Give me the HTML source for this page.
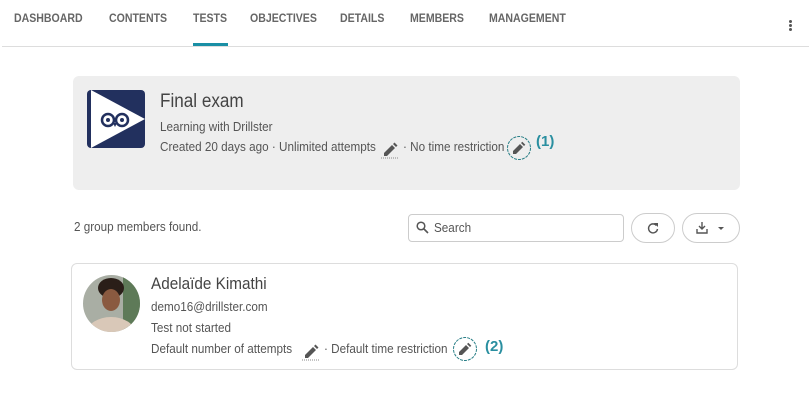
<!DOCTYPE html>
<html><head><meta charset="utf-8"><style>
*{margin:0;padding:0;box-sizing:border-box}
body{width:811px;height:415px;background:#fff;font-family:"Liberation Sans",sans-serif;color:#555;position:relative;overflow:hidden}
.a{position:absolute;white-space:nowrap}
.nav{top:11px;font-size:12px;font-weight:bold;color:#666;transform-origin:left;transform:scaleX(.88)}
.c{transform-origin:left;transform:scaleX(.9)}
</style></head><body>
<div class="a nav" style="left:14px">DASHBOARD</div>
<div class="a nav" style="left:109px">CONTENTS</div>
<div class="a nav" style="left:193px">TESTS</div>
<div class="a nav" style="left:250px">OBJECTIVES</div>
<div class="a nav" style="left:340px">DETAILS</div>
<div class="a nav" style="left:410px">MEMBERS</div>
<div class="a nav" style="left:489px">MANAGEMENT</div>
<div class="a" style="left:789px;top:20px;width:3px;font-size:0">
<div style="width:3px;height:3px;background:#555;border-radius:50%;margin-bottom:1px"></div><div style="width:3px;height:3px;background:#555;border-radius:50%;margin-bottom:1px"></div><div style="width:3px;height:3px;background:#555;border-radius:50%"></div></div>
<div class="a" style="left:193px;top:43px;width:35px;height:3px;background:#1a8fa5"></div>
<div class="a" style="left:2px;top:46px;width:807px;height:1px;background:#ddd"></div>

<div class="a" style="left:73px;top:76px;width:667px;height:114px;background:#eee;border-radius:6px"></div>
<svg class="a" style="left:87px;top:90px" width="58" height="58" viewBox="0 0 58 58">
<rect width="58" height="58" rx="4" fill="#22305e"/>
<polygon points="4,0 4,58 58,29" fill="#fff"/>
<circle cx="21" cy="30" r="6" fill="none" stroke="#22305e" stroke-width="2.5"/>
<circle cx="35" cy="30" r="6" fill="none" stroke="#22305e" stroke-width="2.5"/>
<circle cx="21" cy="30" r="2" fill="#22305e"/><circle cx="35" cy="30" r="2" fill="#22305e"/>
<polygon points="26,33 30,33 28,37" fill="#22305e"/>
</svg>
<div class="a c" style="left:160px;top:91px;font-size:19px;color:#444">Final exam</div>
<div class="a c" style="left:160px;top:119px;font-size:13px">Learning with Drillster</div>
<div class="a c" style="left:160px;top:139px;font-size:13px">Created 20 days ago · Unlimited attempts</div>
<div class="a c" style="left:403px;top:139px;font-size:13px">· No time restriction</div>
<svg class="a" style="left:381px;top:139px" width="18" height="20"><path d="M3 14v3h3l8-8-3-3zM15 8l1.5-1.5-3-3L12 5z" fill="#555"/><line x1="0" y1="19" x2="18" y2="19" stroke="#888" stroke-dasharray="1,1"/></svg>
<svg class="a" style="left:506px;top:135px" width="26" height="26"><circle cx="13" cy="13" r="11.5" fill="none" stroke="#2a7f87" stroke-width="1" stroke-dasharray="3,1"/><path d="M7 16v3h3l7-7-3-3zM18 11l1.3-1.3-3-3L15 8z" fill="#555"/></svg>
<div class="a" style="left:536px;top:133px;font-size:15px;font-weight:bold;color:#2a8fa0">(1)</div>

<div class="a c" style="left:74px;top:219px;font-size:13px">2 group members found.</div>
<div class="a" style="left:408px;top:214px;width:216px;height:28px;border:1px solid #ccc;border-radius:4px"></div>
<svg class="a" style="left:416px;top:221px" width="13" height="13"><circle cx="5" cy="5" r="3.8" fill="none" stroke="#555" stroke-width="1.5"/><line x1="8" y1="8" x2="12" y2="12" stroke="#555" stroke-width="1.6"/></svg>
<div class="a c" style="left:434px;top:220px;font-size:13px;color:#555">Search</div>
<div class="a" style="left:631px;top:213px;width:44px;height:30px;border:1px solid #ccc;border-radius:15px"></div>
<svg class="a" style="left:646px;top:221px" width="14" height="14"><path d="M10.5 4.5A4.5 4.5 0 1 0 11.5 8" fill="none" stroke="#555" stroke-width="1.4"/><polygon points="8,2 12,2 12,6" fill="#555"/></svg>
<div class="a" style="left:682px;top:213px;width:58px;height:30px;border:1px solid #ccc;border-radius:15px"></div>
<svg class="a" style="left:695px;top:220px" width="34" height="16"><path d="M7 2v7M4 6l3 3 3-3M2 9v4h10V9" fill="none" stroke="#555" stroke-width="1.4"/><polygon points="23,7 29,7 26,10" fill="#555"/></svg>

<div class="a" style="left:71px;top:263px;width:667px;height:107px;border:1px solid #ddd;border-radius:6px"></div>
<svg class="a" style="left:83px;top:275px" width="57" height="57"><defs><clipPath id="cp"><circle cx="28.5" cy="28.5" r="28.5"/></clipPath></defs>
<g clip-path="url(#cp)"><rect width="57" height="57" fill="#a9aea4"/><rect x="40" width="17" height="57" fill="#5e7a58"/>
<ellipse cx="28" cy="13" rx="13" ry="10" fill="#2a1e18"/><ellipse cx="28" cy="25" rx="9" ry="11" fill="#8a5a40"/>
<ellipse cx="28" cy="58" rx="24" ry="16" fill="#d9c8b8"/></g></svg>
<div class="a c" style="left:151px;top:274px;font-size:17px;color:#444">Adelaïde Kimathi</div>
<div class="a c" style="left:151px;top:299px;font-size:13px">demo16@drillster.com</div>
<div class="a c" style="left:151px;top:320px;font-size:13px">Test not started</div>
<div class="a c" style="left:151px;top:341px;font-size:13px">Default number of attempts</div>
<div class="a c" style="left:324px;top:341px;font-size:13px">· Default time restriction</div>
<svg class="a" style="left:302px;top:341px" width="18" height="20"><path d="M3 14v3h3l8-8-3-3zM15 8l1.5-1.5-3-3L12 5z" fill="#555"/><line x1="0" y1="19" x2="18" y2="19" stroke="#888" stroke-dasharray="1,1"/></svg>
<svg class="a" style="left:452px;top:336px" width="26" height="26"><circle cx="13" cy="13" r="11.5" fill="none" stroke="#2a7f87" stroke-width="1" stroke-dasharray="3,1"/><path d="M7 16v3h3l7-7-3-3zM18 11l1.3-1.3-3-3L15 8z" fill="#555"/></svg>
<div class="a" style="left:485px;top:338px;font-size:15px;font-weight:bold;color:#2a8fa0">(2)</div>
</body></html>
